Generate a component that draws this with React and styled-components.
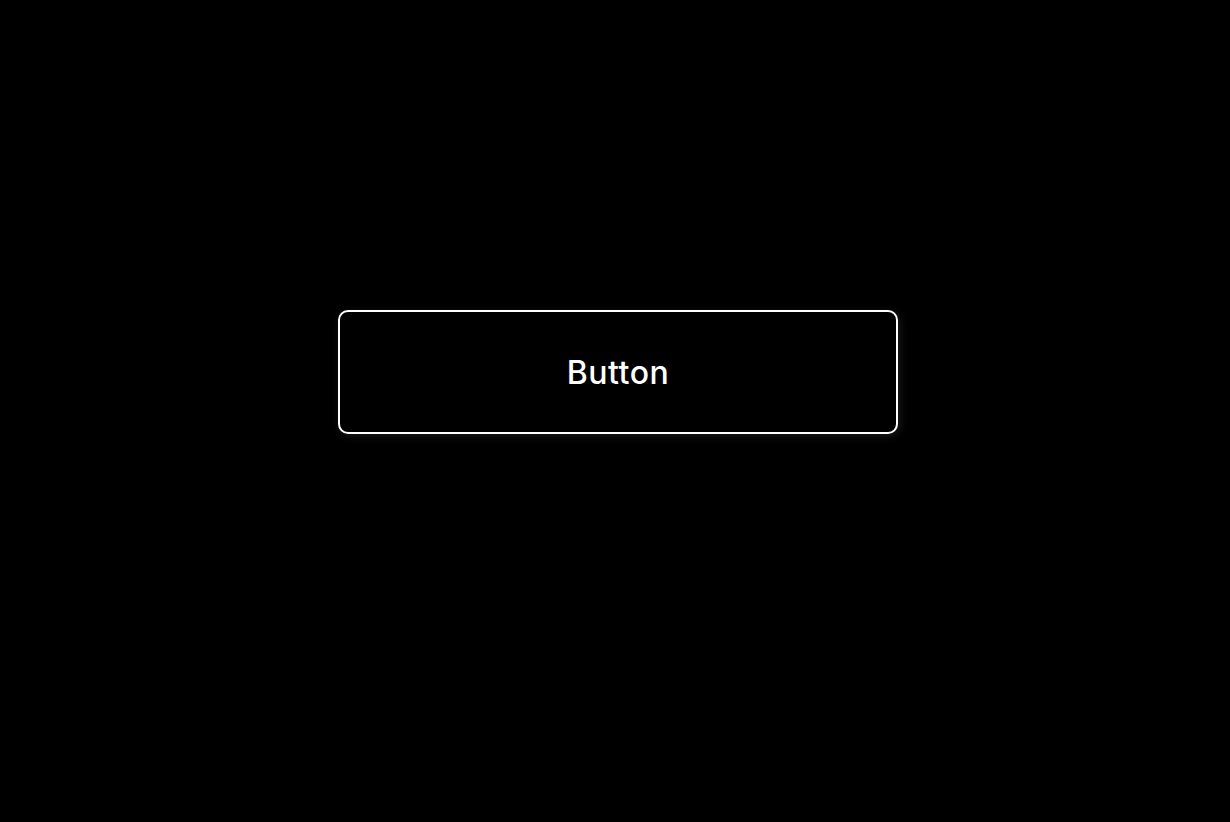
import React from "react";
import styled, { createGlobalStyle } from "styled-components";

const GlobalStyle = createGlobalStyle`
  html, body {
    margin: 0;
    padding: 0;
    background: #000;
  }
  body {
    font-family: Inter, "Noto Sans", sans-serif;
  }
`;

const Page = styled.main`
  min-height: 822px;
  display: flex;
  align-items: flex-start;
  justify-content: flex-start;
  padding: 310px 0 0 338px;
  box-sizing: border-box;
`;

const OutlineButton = styled.button`
  width: 560px;
  height: 124px;
  box-sizing: border-box;
  background: #000;
  color: #fff;
  border: 2px solid #fff;
  border-radius: 10px;
  font-family: Inter, "Noto Sans", sans-serif;
  font-size: 32px;
  font-weight: 500;
  letter-spacing: 0.5px;
  cursor: pointer;
  box-shadow: 2px 2px 8px rgba(255, 255, 255, 0.1);
  display: flex;
  align-items: center;
  justify-content: center;
  padding: 0;
`;

export default function App() {
  return (
    <>
      <GlobalStyle />
      <Page>
        <OutlineButton>Button</OutlineButton>
      </Page>
    </>
  );
}
